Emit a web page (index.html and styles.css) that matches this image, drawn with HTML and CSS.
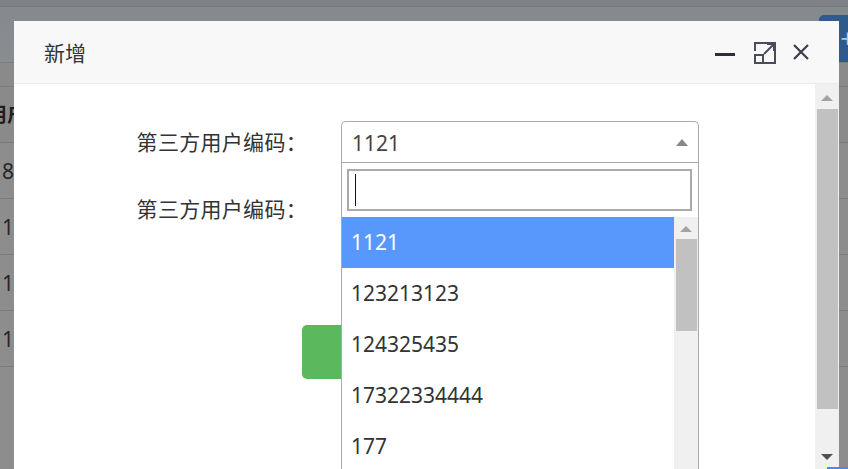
FILE: index.html
```html
<!DOCTYPE html>
<html lang="zh-CN">
<head>
<meta charset="utf-8">
<title>新增</title>
<link rel="stylesheet" href="styles.css">
</head>
<body>
<div class="page">
  <div class="topbar">
    <div class="topband"></div>
    <div class="toprow">
      <div class="addbtn">+</div>
    </div>
  </div>
  <div class="toolgap"></div>
  <div class="tbl">
    <div class="tr th"><span class="cell-h">用户</span></div>
    <div class="tr"><span class="cell">81</span></div>
    <div class="tr"><span class="cell">10</span></div>
    <div class="tr"><span class="cell">14</span></div>
    <div class="tr"><span class="cell">10</span></div>
  </div>
</div>

<div class="modal">
  <div class="modal-head">
    <span class="modal-title">新增</span>
    <div class="modal-tools">
      <span class="tool-min"></span>
      <svg class="tool-max" width="22" height="22" viewBox="0 0 22 22" fill="none" stroke="#4a4c5c" stroke-width="2">
        <path d="M1 9 V1 H21 V21 H9"/>
        <rect x="1" y="13" width="8" height="8"/>
        <path d="M10 12 L19.5 2.5"/>
        <path d="M13 2 H20 V9"/>
      </svg>
      <svg class="tool-close" width="16" height="16" viewBox="0 0 16 16" fill="none" stroke="#3c3d4b" stroke-width="2.2">
        <path d="M1 1 L15 15 M15 1 L1 15"/>
      </svg>
    </div>
  </div>
  <div class="modal-body">
    <div class="content">
      <div class="form-row">
        <label class="form-label">第三方用户编码：</label>
        <div class="form-ctl"></div>
      </div>
      <div class="form-row">
        <label class="form-label">第三方用户编码：</label>
        <div class="form-ctl"></div>
      </div>
      <div class="btn-row">
        <span class="btn-ok">确定</span>
      </div>

      <div class="select2">
        <div class="sel-box">
          <span class="sel-value">1121</span>
          <span class="sel-arrow"></span>
        </div>
        <div class="drop">
          <div class="search-wrap">
            <div class="search"><span class="caret"></span></div>
          </div>
          <div class="results">
            <ul class="opts">
              <li class="opt active">1121</li>
              <li class="opt">123213123</li>
              <li class="opt">124325435</li>
              <li class="opt">17322334444</li>
              <li class="opt">177</li>
            </ul>
            <div class="sbar small">
              <span class="arr-up"></span>
              <span class="thumb"></span>
            </div>
          </div>
        </div>
      </div>
    </div>
    <div class="sbar big">
      <span class="arr-up"></span>
      <span class="thumb"></span>
      <span class="spacer"></span>
      <span class="arr-down"></span>
    </div>
  </div>
</div>
<div class="corner-blue"></div>
</body>
</html>
```

FILE: styles.css
```css
* { box-sizing: border-box; }
html, body {
  margin: 0;
  padding: 0;
  width: 848px;
  height: 469px;
  overflow: hidden;
}
body {
  background: #8d8d8d;
  font-family: "Noto Sans", "Noto Sans CJK SC", sans-serif;
  color: #333;
  position: relative;
}

/* background page (dimmed) */
.page {
  display: flex;
  flex-direction: column;
}
.topbar {
  height: 63px;
  background: linear-gradient(#85898e, #898c90);
  border-bottom: 1px solid #7b7b7b;
  display: flex;
  flex-direction: column;
}
.topband {
  height: 7px;
  background: #7e8185;
  border-bottom: 1px solid #77797c;
}
.toprow {
  flex: 1;
  display: flex;
  justify-content: flex-end;
  padding-top: 8px;
}
.addbtn {
  width: 36px;
  height: 47px;
  margin-right: -7px;
  background: #2e5b8c;
  border-radius: 5px 0 0 0;
  color: #b8c4d2;
  font-size: 26px;
  line-height: 46px;
  text-align: right;
}
.toolgap {
  height: 24px;
  background: #8a8a8a;
  border-bottom: 1px solid #7a7a7a;
}
.tbl { display: flex; flex-direction: column; }
.tr {
  height: 56px;
  border-bottom: 1px solid #7a7a7a;
  display: flex;
  align-items: center;
  overflow: hidden;
}
.th { background: #8a8a8a; }
.cell-h {
  font-weight: bold;
  font-size: 20px;
  color: #1e1e1e;
  margin-left: -13px;
  margin-top: -2px;
}
.cell {
  font-size: 21px;
  color: #262626;
  margin-left: 2px;
}

/* modal */
.modal {
  position: absolute;
  left: 14px;
  top: 21px;
  width: 825px;
  height: 448px;
  background: #fff;
  display: flex;
  flex-direction: column;
}
.modal-head {
  height: 63px;
  background: #f8f8f8;
  border-bottom: 1px solid #ececec;
  display: flex;
  align-items: center;
  padding: 0 30px 0 30px;
}
.modal-title {
  font-size: 21px;
  color: #333;
  flex: 1;
  margin-top: -1px;
}
.modal-tools {
  display: flex;
  align-items: center;
}
.tool-min {
  width: 20px;
  height: 3px;
  background: #2e2e3e;
  margin-top: 4px;
}
.tool-max { margin-left: 19px; margin-top: 1px; }
.tool-close { margin-left: 17px; }

.modal-body {
  flex: 1;
  display: flex;
  min-height: 0;
}
.content {
  flex: 1;
  position: relative;
  padding-top: 37px;
}
.form-row {
  display: flex;
  align-items: center;
  height: 40px;
  margin-bottom: 27px;
}
.form-label {
  width: 293px;
  text-align: right;
  font-size: 21px;
  color: #333;
  font-family: "Noto Sans CJK SC", sans-serif;
  letter-spacing: 0.3px;
}
.form-ctl {
  margin-left: 34px;
  width: 358px;
  height: 40px;
}
.btn-row {
  padding-left: 288px;
  padding-top: 70px;
}
.btn-ok {
  display: inline-block;
  width: 120px;
  height: 54px;
  border-radius: 5px;
  background: #5cb85c;
  color: #fff;
  font-size: 21px;
  line-height: 54px;
  text-align: center;
}

/* select2 open dropdown */
.select2 {
  position: absolute;
  left: 327px;
  top: 37px;
  width: 358px;
}
.sel-box {
  height: 41px;
  border: 1px solid #aaa;
  border-bottom: none;
  border-radius: 5px 5px 0 0;
  background: #fff;
  display: flex;
  align-items: center;
  padding-left: 10px;
  padding-right: 10px;
}
.sel-value {
  flex: 1;
  font-size: 21px;
  color: #444;
  margin-top: 1px;
}
.sel-arrow {
  width: 0;
  height: 0;
  border-left: 6px solid transparent;
  border-right: 6px solid transparent;
  border-bottom: 7px solid #888;
  margin-top: 1px;
}
.drop {
  border: 1px solid #aaa;
  background: #fff;
  height: 320px;
}
.search-wrap {
  padding: 6px 6px 6px 5px;
}
.search {
  height: 42px;
  border: 2px solid #aaa;
  display: flex;
  align-items: center;
  padding-left: 6px;
}
.caret {
  width: 1px;
  height: 32px;
  background: #111;
}
.results {
  display: flex;
  height: 260px;
}
.opts {
  list-style: none;
  margin: 0;
  padding: 0;
  flex: 1;
}
.opt {
  height: 51px;
  line-height: 51px;
  padding-left: 9px;
  font-size: 21px;
  color: #333;
}
.opt.active {
  background: #5897fb;
  color: #fff;
}

/* scrollbars */
.sbar {
  width: 24px;
  background: #f0f0f0;
  display: flex;
  flex-direction: column;
  align-items: center;
}
.sbar .arr-up {
  width: 0;
  height: 0;
  border-left: 6px solid transparent;
  border-right: 6px solid transparent;
  border-bottom: 6px solid #a3a3a3;
  margin-top: 9px;
}
.sbar .thumb {
  width: 21px;
  background: #c1c1c1;
  margin-top: 7px;
  margin-left: 1px;
}
.sbar.small .thumb { height: 92px; }
.sbar.big { height: 385px; }
.sbar.big .arr-up { margin-top: 11px; }
.sbar.big .thumb { height: 300px; margin-top: 8px; }
.sbar .spacer { flex: 1; }
.sbar .arr-down {
  width: 0;
  height: 0;
  border-left: 6px solid transparent;
  border-right: 6px solid transparent;
  border-top: 6px solid #505050;
  margin-bottom: 9px;
}
.corner-blue {
  position: absolute;
  left: 827px;
  top: 467px;
  width: 21px;
  height: 2px;
  background: #4a8af0;
}
```
